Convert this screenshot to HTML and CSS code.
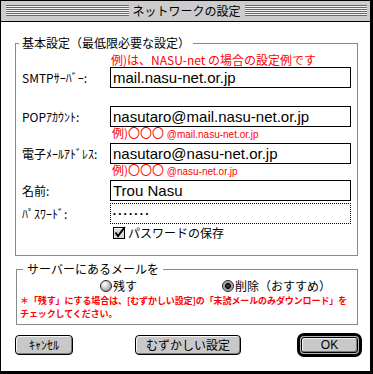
FILE: index.html
```html
<!DOCTYPE html>
<html lang="ja">
<head>
<meta charset="utf-8">
<title>ネットワークの設定</title>
<link rel="stylesheet" href="styles.css">
</head>
<body>
<div class="window">
  <div class="titlebar">
    <div class="stripes"></div>
    <div class="title">ネットワークの設定</div>
    <div class="stripes"></div>
  </div>
  <div class="content">
    <fieldset class="group g1">
      <legend>基本設定（最低限必要な設定）</legend>
      <div class="note">例)は、NASU-net の場合の設定例です</div>
      <div class="row r-smtp">
        <span class="label">SMTPｻｰﾊﾞｰ:</span>
        <div class="field">mail.nasu-net.or.jp</div>
      </div>
      <div class="row r-pop">
        <span class="label">POPｱｶｳﾝﾄ:</span>
        <div class="field">nasutaro@mail.nasu-net.or.jp</div>
      </div>
      <div class="example">例)〇〇〇 <span class="small">@mail.nasu-net.or.jp</span></div>
      <div class="row">
        <span class="label">電子ﾒｰﾙｱﾄﾞﾚｽ:</span>
        <div class="field">nasutaro@nasu-net.or.jp</div>
      </div>
      <div class="example">例)〇〇〇 <span class="small">@nasu-net.or.jp</span></div>
      <div class="row">
        <span class="label">名前:</span>
        <div class="field">Trou Nasu</div>
      </div>
      <div class="row r-pwd">
        <span class="label">ﾊﾟｽﾜｰﾄﾞ:</span>
        <div class="field pwd"><span class="dots">•••••••</span></div>
      </div>
      <div class="check-row">
        <svg class="checkbox" width="13" height="13" viewBox="0 0 13 13">
          <rect x="0.5" y="1.5" width="11" height="11" fill="#d8d8d8" stroke="#000"/>
          <line x1="1.5" y1="2.5" x2="10.5" y2="2.5" stroke="#fff"/>
          <path d="M2.5 6.5 L5 10 L11.8 1" fill="none" stroke="#000" stroke-width="2"/>
        </svg>
        <span>パスワードの保存</span>
      </div>
    </fieldset>

    <fieldset class="group g2">
      <legend>サーバーにあるメールを</legend>
      <div class="radio-row">
        <span class="radio-item"><span class="radio"></span>残す</span>
        <span class="radio-item"><span class="radio on"></span>削除（おすすめ）</span>
      </div>
      <div class="warn">＊「残す」にする場合は、[むずかしい設定]の「未読メールのみダウンロード」を<br>チェックしてください。</div>
    </fieldset>

    <div class="buttons">
      <div class="btn cancel">ｷｬﾝｾﾙ</div>
      <div class="btn advanced">むずかしい設定</div>
      <div class="default-ring"><div class="btn ok">OK</div></div>
    </div>
  </div>
</div>
</body>
</html>
```

FILE: styles.css
```css
* { box-sizing: border-box; }
html, body { margin: 0; padding: 0; background: #fff; }
body {
  font-family: "Noto Sans CJK JP", sans-serif;
  font-size: 12px;
  color: #000;
}
.window {
  width: 373px;
  height: 374px;
  border: 1px solid #000;
  border-right-width: 3px;
  border-bottom-width: 3px;
  background: #fff;
  display: flex;
  flex-direction: column;
}
.titlebar {
  flex: none;
  height: 21px;
  background: #cccccc;
  border-bottom: 1px solid #000;
  display: flex;
  align-items: center;
  padding: 0 3px 0 5px;
}
.stripes {
  flex: 1;
  height: 11px;
  margin-top: -1px;
  background: repeating-linear-gradient(to bottom, #6a6a6a 0 1px, #f2f2f2 1px 2px);
}
.title {
  padding: 0 4px;
  line-height: 20px;
}
.content {
  flex: 1;
  display: flex;
  flex-direction: column;
  padding: 0 8px 0 14px;
}
.group {
  margin: 0;
  width: 343px;
  min-width: 0;
  border: 1px solid #8a8a8a;
}
.group legend {
  line-height: 14px;
  padding: 0 3px;
}
.g1 {
  margin-top: 14px;
  padding: 0 5px 16px 6px;
}
.g1 legend { margin-left: -3px; }
.note {
  margin-top: 3px;
  line-height: 14px;
  padding-left: 89px;
  color: #f00;
  white-space: nowrap;
}
.row {
  display: grid;
  grid-template-columns: 88px 241px;
  align-items: center;
}
.r-pop { margin-top: 18px; }
.r-pwd { margin-top: 2px; }
.label { white-space: nowrap; line-height: 14px; }
.field {
  height: 21px;
  border: 1px solid #000;
  background: #fff;
  padding: 0 2px;
  font-family: "Liberation Sans", Arial, sans-serif;
  font-size: 15px;
  line-height: 19px;
  white-space: nowrap;
  overflow: hidden;
}
.field.pwd {
  border: 1px dotted #000;
  display: flex;
  align-items: center;
}
.dots {
  font-size: 8px;
  letter-spacing: 2.6px;
  line-height: 8px;
}
.example {
  height: 16px;
  line-height: 12px;
  padding-left: 90px;
  color: #f00;
  white-space: nowrap;
}
.example .small {
  font-family: "Liberation Sans", Arial, sans-serif;
  font-size: 10px;
}
.check-row {
  margin-top: 2px;
  height: 13px;
  padding-left: 91px;
  display: flex;
  align-items: center;
  gap: 2px;
  line-height: 13px;
}
.checkbox { display: block; flex: none; }

.g2 {
  margin: 7px 0 0 1px;
  width: 342px;
  padding: 0 3px 4px 3px;
}
.g2 legend { margin-left: 3px; padding: 0 4px; line-height: 12px; }
.radio-row {
  margin-top: 4px;
  height: 14px;
  padding-left: 80px;
  display: flex;
  align-items: center;
  gap: 85px;
  line-height: 12px;
}
.radio-item {
  display: flex;
  align-items: center;
  gap: 1px;
}
.radio {
  display: block;
  width: 12px;
  height: 12px;
  border-radius: 50%;
  border: 1px solid #222;
  background: radial-gradient(circle at 35% 32%, #fff 0, #e4e4e4 25%, #a8a8a8 70%, #777 100%);
}
.radio.on {
  background: radial-gradient(circle at 50% 50%, #555 0, #000 2.6px, #9a9a9a 3.2px, #d6d6d6 100%);
}
.warn {
  margin-top: 1px;
  color: #f00;
  font-size: 9px;
  font-weight: 700;
  line-height: 13px;
  white-space: nowrap;
  letter-spacing: -0.1px;
}

.buttons {
  margin-top: 8px;
  height: 24px;
  display: flex;
  align-items: center;
}
.btn {
  height: 20px;
  border: 1px solid #000;
  border-radius: 4px;
  background: #c8c8c8;
  box-shadow: inset 1px 1px 0 #f4f4f4, inset -1px -1px 0 #7a7a7a;
  display: flex;
  align-items: center;
  justify-content: center;
  line-height: 14px;
  white-space: nowrap;
}
.cancel { width: 58px; }
.advanced { width: 106px; margin-left: 62px; }
.default-ring {
  margin-left: auto;
  width: 65px;
  height: 24px;
  border: 3px solid #000;
  border-radius: 7px;
  padding: 1px;
  background: #b8b8b8;
}
.ok {
  width: 100%;
  height: 16px;
  border-radius: 3px;
  font-family: "Liberation Sans", Arial, sans-serif;
  font-size: 12px;
}
```
